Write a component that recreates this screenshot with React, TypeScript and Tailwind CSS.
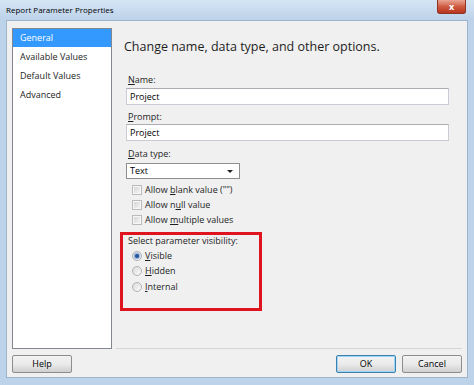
const font = "font-['Open_Sans','Noto_Sans',sans-serif]";

function Key({ children }: { children: string }) {
  return <span className="underline underline-offset-[1px]">{children}</span>;
}

function Checkbox({ children }: { children: React.ReactNode }) {
  return (
    <div className="flex h-[15px] items-center pl-[16px]">
      <span className="flex h-[10px] w-[10px] items-center justify-center border border-[#bcbcbc] bg-[#f6f6f6]">
        <span className="h-[6px] w-[6px] bg-gradient-to-br from-[#d6d6d6] to-[#f4f4f4]" />
      </span>
      <span className="ml-[3px] text-[9px] leading-[12px] text-[#1e1e1e]">{children}</span>
    </div>
  );
}

function Radio({ checked, children }: { checked?: boolean; children: React.ReactNode }) {
  return (
    <div className="flex h-[15.5px] items-center pl-[9px]">
      <span className="flex h-[10px] w-[10px] items-center justify-center rounded-full border border-[#b0b0b0] bg-gradient-to-br from-[#dcdcdc] to-[#fbfbfb]">
        {checked && <span className="h-[4px] w-[4px] rounded-full bg-[#29589a] shadow-[0_0_1px_1px_#7fa7d8]" />}
      </span>
      <span className="ml-[3px] text-[9px] leading-[12px] text-[#1e1e1e]">{children}</span>
    </div>
  );
}

function Button({ label, primary }: { label: string; primary?: boolean }) {
  return (
    <div
      className={`flex h-[18px] w-[60px] items-center justify-center rounded-[2px] border bg-gradient-to-b from-[#f2f2f2] via-[#ebebeb] to-[#cfcfcf] text-[9px] text-black ${
        primary ? "border-[#3c7fb1] shadow-[inset_0_0_0_1px_#9ed4f4]" : "border-[#8d8d8d]"
      }`}
    >
      {label}
    </div>
  );
}

export default function App() {
  const pages = ["General", "Available Values", "Default Values", "Advanced"];

  return (
    <div className={`flex h-[385px] w-[474px] flex-col overflow-hidden bg-[#bcd3ea] ${font}`}>
      {/* title bar */}
      <div className="relative flex h-[20px] items-center bg-gradient-to-b from-[#d6e5f4] to-[#bcd2ea] px-[6px] text-[8px] text-black">
        Report Parameter Properties
        <div className="absolute right-[8px] top-0 flex h-[14px] w-[29px] items-center justify-center rounded-b-[3px] border border-t-0 border-[#8f3322] bg-gradient-to-b from-[#e8a596] via-[#cf5a41] to-[#b8341e] text-[9px] font-bold leading-none text-white">
          x
        </div>
      </div>

      {/* client area */}
      <div className="mx-[6px] flex h-[358px] flex-col border border-[#9fb4cb] bg-[#f0f0f0]">
        <div className="flex px-[5px] pt-[7px]">
          <div className="h-[321px] w-[100px] border border-[#828790] bg-white">
            {pages.map((p, i) => (
              <div
                key={p}
                className={`flex items-center pl-[7px] text-[9px] ${
                  i === 0 ? "h-[18px] bg-[#3399ff] text-white" : "h-[19px] text-[#1e1e1e]"
                }`}
              >
                {p}
              </div>
            ))}
          </div>

          <div className="ml-[4px] h-[321px] flex-1 border-b border-[#d5d5d5]">
            <div className="ml-[8px] mt-[11px] h-[16px] text-[12.5px] leading-[16px] text-[#1e1e1e]">
              Change name, data type, and other options.
            </div>

            <div className="ml-[12px] mt-[19px] text-[9px] leading-[12px] text-[#1e1e1e]">
              <Key>N</Key>ame:
            </div>
            <div className="ml-[10px] mt-[2px] flex h-[17px] w-[323px] items-center border border-[#c9cdd3] border-t-[#abadb3] bg-white pl-[3px] text-[9px]">
              Project
            </div>

            <div className="ml-[12px] mt-[6px] text-[9px] leading-[12px] text-[#1e1e1e]">
              <Key>P</Key>rompt:
            </div>
            <div className="ml-[10px] mt-[1px] flex h-[17px] w-[323px] items-center border border-[#c9cdd3] border-t-[#abadb3] bg-white pl-[3px] text-[9px]">
              Project
            </div>

            <div className="ml-[12px] mt-[7px] text-[9px] leading-[12px] text-[#1e1e1e]">
              <Key>D</Key>ata type:
            </div>
            <div className="ml-[10px] mt-[3px] flex h-[16px] w-[114px] items-center justify-between border border-[#8e8f8f] bg-white pl-[3px] pr-[6px] text-[9px]">
              Text
              <svg width="6" height="3" viewBox="0 0 6 3">
                <path d="M0 0h6L3 3z" fill="#222" />
              </svg>
            </div>

            <div className="mt-[3px]">
              <Checkbox>
                Allow <Key>b</Key>lank value ("")
              </Checkbox>
              <Checkbox>
                Allow n<Key>u</Key>ll value
              </Checkbox>
              <Checkbox>
                Allow <Key>m</Key>ultiple values
              </Checkbox>
            </div>

            <div className="ml-[4px] mt-[5px] h-[79px] w-[142px] border-[3px] border-[#e0141e]">
              <div className="pl-[5px] text-[9px] leading-[12px] text-[#1e1e1e]">Select parameter visibility:</div>
              <div className="mt-[1px]">
                <Radio checked>
                  <Key>V</Key>isible
                </Radio>
                <Radio>
                  <Key>H</Key>idden
                </Radio>
                <Radio>
                  <Key>I</Key>nternal
                </Radio>
              </div>
            </div>
          </div>
        </div>

        <div className="mt-[6px] flex px-[5px]">
          <Button label="Help" />
          <div className="ml-auto flex gap-[6px]">
            <Button label="OK" primary />
            <Button label="Cancel" />
          </div>
        </div>
      </div>
    </div>
  );
}
